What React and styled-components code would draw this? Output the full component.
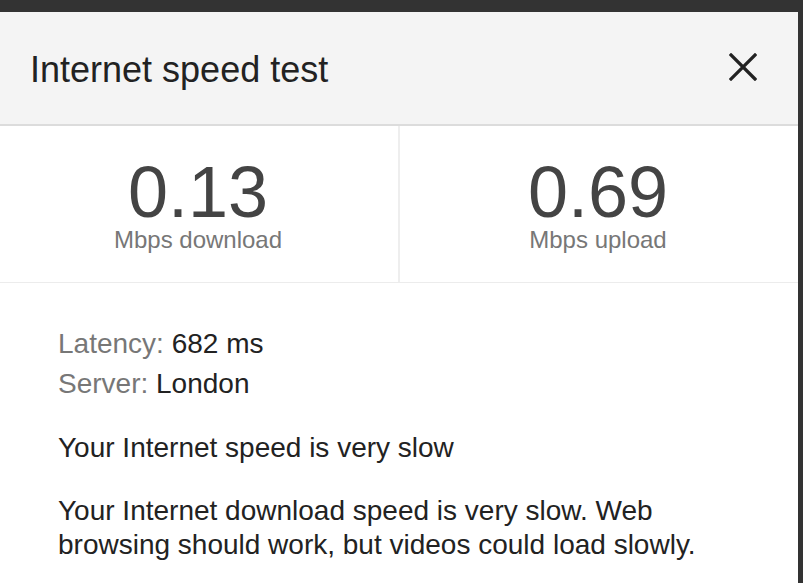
import React from "react";
import styled, { createGlobalStyle } from "styled-components";

const GlobalStyle = createGlobalStyle`
  html, body {
    margin: 0;
    padding: 0;
    background: #333333;
    font-family: "Liberation Sans", Arial, sans-serif;
  }
  * {
    box-sizing: border-box;
  }
`;

const Frame = styled.div`
  width: 803px;
  height: 583px;
  padding: 12px 5px 0 0;
  background: #333333;
  overflow: hidden;
`;

const Panel = styled.div`
  width: 798px;
  height: 571px;
  background: #ffffff;
  display: flex;
  flex-direction: column;
`;

const Header = styled.div`
  display: flex;
  align-items: center;
  justify-content: space-between;
  height: 114px;
  padding: 3px 41px 0 30px;
  background: #f4f4f4;
  border-bottom: 2px solid #dcdcdc;
`;

const Title = styled.h1`
  margin: 0;
  font-size: 36px;
  font-weight: 400;
  line-height: 36px;
  color: #222222;
`;

const CloseButton = styled.button`
  display: flex;
  align-items: center;
  justify-content: center;
  width: 28px;
  height: 28px;
  margin-bottom: 5px;
  padding: 0;
  border: none;
  background: transparent;
  cursor: pointer;
`;

const StatsRow = styled.div`
  display: flex;
  height: 157px;
  border-bottom: 1px solid #ececec;
`;

const Stat = styled.div`
  flex: 1;
  display: flex;
  flex-direction: column;
  align-items: center;
  padding: 31px 2px 0 0;
  border-right: ${(props) => (props.divider ? "2px solid #eeeeee" : "none")};
`;

const StatValue = styled.div`
  font-size: 72px;
  line-height: 71px;
  color: #444444;
`;

const StatLabel = styled.div`
  font-size: 24px;
  line-height: 24px;
  color: #777777;
`;

const Details = styled.div`
  padding: 41px 59px 0 58px;
  font-size: 28px;
  color: #222222;
`;

const InfoLine = styled.div`
  line-height: 40px;
`;

const InfoKey = styled.span`
  color: #777777;
`;

const Summary = styled.p`
  margin: 27px 0 0;
  line-height: 34px;
`;

const Description = styled.p`
  margin: 29px 0 0;
  line-height: 34px;
`;

function CloseIcon() {
  return (
    <svg width="28" height="28" viewBox="0 0 28 28">
      <path
        d="M2 2 L26 26 M26 2 L2 26"
        stroke="#222222"
        strokeWidth="3.2"
        strokeLinecap="square"
        fill="none"
      />
    </svg>
  );
}

const stats = [
  { value: "0.13", label: "Mbps download" },
  { value: "0.69", label: "Mbps upload" },
];

export default function App() {
  return (
    <Frame>
      <GlobalStyle />
      <Panel>
        <Header>
          <Title>Internet speed test</Title>
          <CloseButton aria-label="Close">
            <CloseIcon />
          </CloseButton>
        </Header>
        <StatsRow>
          {stats.map((s, i) => (
            <Stat key={s.label} divider={i === 0}>
              <StatValue>{s.value}</StatValue>
              <StatLabel>{s.label}</StatLabel>
            </Stat>
          ))}
        </StatsRow>
        <Details>
          <InfoLine>
            <InfoKey>Latency:</InfoKey> 682 ms
          </InfoLine>
          <InfoLine>
            <InfoKey>Server:</InfoKey> London
          </InfoLine>
          <Summary>Your Internet speed is very slow</Summary>
          <Description>
            Your Internet download speed is very slow. Web browsing should
            work, but videos could load slowly.
          </Description>
        </Details>
      </Panel>
    </Frame>
  );
}
